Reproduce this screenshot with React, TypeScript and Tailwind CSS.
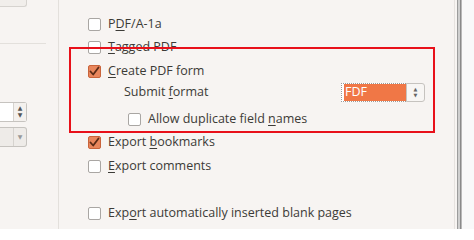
import React from "react";

const font = { fontFamily: '"Open Sans", "DejaVu Sans", sans-serif' };

const Box = ({ checked }: { checked?: boolean }) =>
  checked ? (
    <span className="w-[13px] h-[13px] rounded-[2px] bg-[#e9865c] border border-[#c9643b] flex items-center justify-center shrink-0">
      <svg width="11" height="11" viewBox="0 0 11 11">
        <path d="M1.5 5.5 L4.2 8.5 L9.5 1.5" fill="none" stroke="#5a2a16" strokeWidth="1.8" strokeLinecap="round" strokeLinejoin="round" />
      </svg>
    </span>
  ) : (
    <span className="w-[13px] h-[13px] rounded-[2px] bg-white border border-[#a9a6a3] shrink-0" />
  );

const U = ({ children }: { children: React.ReactNode }) => <span className="underline underline-offset-2">{children}</span>;

const Row = ({ checked, h, children, extra }: { checked?: boolean; h: string; children: React.ReactNode; extra?: string }) => (
  <div className={`flex items-center gap-[7px] ${h} ${extra ?? ""}`}>
    <Box checked={checked} />
    <span className="leading-none">{children}</span>
  </div>
);

export default function App() {
  return (
    <div className="w-[474px] h-[229px] flex bg-[#f7f4f2] text-[#3c3b37] text-[12.5px] overflow-hidden" style={font}>
      {/* left column, cut off */}
      <div className="w-[58px] shrink-0 flex flex-col">
        <div className="w-[27px] h-[7px] bg-[#f1eeeb] border-b border-r border-[#d6d3cf] rounded-br-[3px]" />
        <div className="mt-[36px] w-[46px] h-px bg-[#e3e0dc]" />
        <div className="mt-[58px] w-[27px] h-[20px] flex border border-[#c6c3bf] border-l-0 rounded-r-[3px] bg-white">
          <div className="w-[13px]" />
          <div className="flex-1 bg-[#f4f1ee] border-l border-[#d6d3cf] flex flex-col items-center justify-center text-[6px] leading-[7px] text-[#555]">
            <span>▲</span>
            <span>▼</span>
          </div>
        </div>
        <div className="mt-[5px] w-[27px] h-[20px] flex border border-[#c6c3bf] border-l-0 rounded-r-[3px] bg-[#eeebe8]">
          <div className="w-[13px]" />
          <div className="flex-1 border-l border-[#d6d3cf] flex items-center justify-center text-[6px] text-[#999]">▼</div>
        </div>
      </div>
      <div className="w-px bg-[#e3e0dc] shrink-0" />

      {/* main options */}
      <div className="relative w-[395px] shrink-0 pt-[12px] pl-[29px]">
        <Row h="h-[24px]">
          P<U>D</U>F/A-1a
        </Row>
        <Row h="h-[23px]">
          <U>T</U>agged PDF
        </Row>
        <Row checked h="h-[24px]">
          <U>C</U>reate PDF form
        </Row>
        <div className="h-[18px] flex items-center pl-[36px]">
          <span className="leading-none">
            Submit <U>f</U>ormat
          </span>
          <div className="ml-auto mr-[29px] flex h-[19px]">
            <div className="w-[65px] pl-[2px] flex items-center bg-white border border-dotted border-[#9a9a9a] border-r-0">
              <span className="h-full w-full bg-[#f07746] text-white flex items-center pl-[1px] leading-none">FDF</span>
            </div>
            <div className="w-[19px] border border-[#c6c3bf] rounded-r-[3px] bg-[#f8f6f4] flex flex-col items-center justify-center text-[5px] leading-[6px] text-[#666]">
              <span>▲</span>
              <span>▼</span>
            </div>
          </div>
        </div>
        <Row h="h-[24px]" extra="mt-[6px] ml-[40px]">
          Allow duplicate field <U>n</U>ames
        </Row>
        <Row checked h="h-[23px]">
          Export <U>b</U>ookmarks
        </Row>
        <Row h="h-[24px]">
          <U>E</U>xport comments
        </Row>
        <Row h="h-[24px]" extra="mt-[23px]">
          Exp<U>o</U>rt automatically inserted blank pages
        </Row>

        {/* red annotation frame */}
        <div className="absolute left-[10px] top-[47px] w-[366px] h-[86px] border-2 border-[#e8101a]" />
      </div>

      {/* right edge / scrollbar */}
      <div className="w-px bg-[#e6e2df] shrink-0" />
      <div className="w-[2px] shrink-0" />
      <div className="w-px bg-[#9c9c9c] shrink-0" />
      <div className="w-[2px] bg-[#cfcfcf] shrink-0" />
      <div className="w-px bg-[#8a8a8a] shrink-0" />
      <div className="w-px bg-[#b8b8b8] shrink-0" />
      <div className="flex-1 bg-[#f9f9f9]" />
    </div>
  );
}
